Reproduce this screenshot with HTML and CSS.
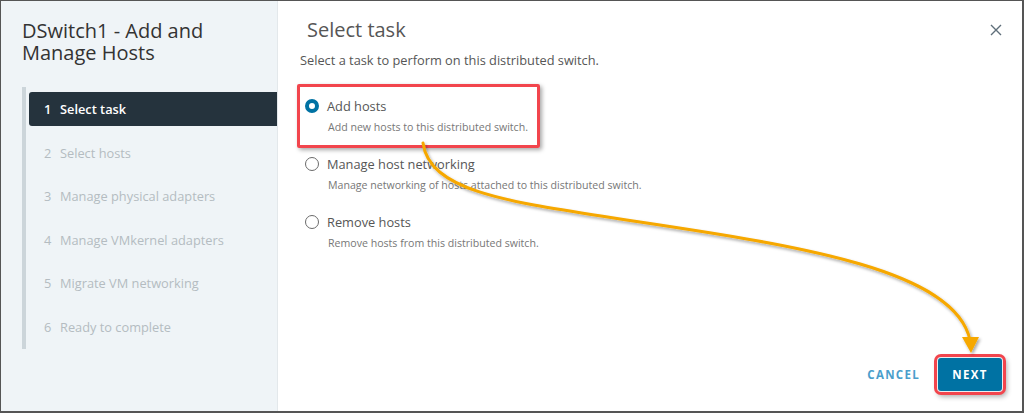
FILE: index.html
```html
<!DOCTYPE html>
<html lang="en">
<head>
<meta charset="utf-8">
<title>DSwitch1 - Add and Manage Hosts</title>
<link rel="stylesheet" href="styles.css">
</head>
<body>
<div class="modal">
  <aside class="sidebar">
    <h1 class="wizard-title">DSwitch1 - Add and Manage Hosts</h1>
    <ol class="steps">
      <li class="step active"><span class="num">1</span><span class="label">Select task</span></li>
      <li class="step"><span class="num">2</span><span class="label">Select hosts</span></li>
      <li class="step"><span class="num">3</span><span class="label">Manage physical adapters</span></li>
      <li class="step"><span class="num">4</span><span class="label">Manage VMkernel adapters</span></li>
      <li class="step"><span class="num">5</span><span class="label">Migrate VM networking</span></li>
      <li class="step"><span class="num">6</span><span class="label">Ready to complete</span></li>
    </ol>
  </aside>
  <main class="content">
    <header class="content-header">
      <h2 class="page-title">Select task</h2>
      <button class="close" aria-label="Close">
        <svg width="12" height="12" viewBox="0 0 12 12"><path d="M1 1L11 11M11 1L1 11" stroke="#5f6f7a" stroke-width="1.4" fill="none"/></svg>
      </button>
    </header>
    <p class="intro">Select a task to perform on this distributed switch.</p>
    <div class="options">
      <div class="option highlighted">
        <div class="option-row"><span class="radio checked"></span><span class="option-label">Add hosts</span></div>
        <div class="option-desc">Add new hosts to this distributed switch.</div>
      </div>
      <div class="option">
        <div class="option-row"><span class="radio"></span><span class="option-label">Manage host networking</span></div>
        <div class="option-desc">Manage networking of hosts attached to this distributed switch.</div>
      </div>
      <div class="option">
        <div class="option-row"><span class="radio"></span><span class="option-label">Remove hosts</span></div>
        <div class="option-desc">Remove hosts from this distributed switch.</div>
      </div>
    </div>
    <footer class="footer">
      <button class="btn-cancel">CANCEL</button>
      <button class="btn-next">NEXT</button>
    </footer>
  </main>
  <svg class="arrow" width="1024" height="413" viewBox="0 0 1024 413">
    <defs>
      <filter id="sh" x="-10%" y="-10%" width="120%" height="120%">
        <feDropShadow dx="1.5" dy="2" stdDeviation="1.5" flood-color="#000" flood-opacity="0.35"/>
      </filter>
    </defs>
    <g filter="url(#sh)">
      <path d="M423 143 C 430 195 520 203 640 222 C 800 246 955 270 970 340" stroke="#f6a800" stroke-width="3" fill="none" stroke-linecap="round"/>
      <path d="M962 337 L979 337 L971 353 Z" fill="#f6a800"/>
    </g>
  </svg>
</div>
</body>
</html>
```
FILE: styles.css
```css
* { box-sizing: border-box; }
html, body { margin: 0; padding: 0; }
body {
  width: 1024px;
  height: 413px;
  background: #4f4f4f;
  font-family: "Open Sans", "Noto Sans", sans-serif;
  overflow: hidden;
}
.modal {
  position: relative;
  display: flex;
  width: 1024px;
  height: 413px;
  border-top: 1px solid #555;
  border-left: 1px solid #555;
  border-right: 2px solid #555;
  border-bottom: 2px solid #555;
  background: #fff;
}
.sidebar {
  width: 277px;
  flex: none;
  background: #eff4f7;
  border-right: 1px solid #e3e8eb;
  padding: 19px 0 0 21px;
}
.wizard-title {
  margin: 0;
  font-size: 20px;
  line-height: 22px;
  font-weight: 400;
  color: #333;
  width: 230px;
}
.steps {
  list-style: none;
  margin: 23px 0 0 0;
  padding: 5px 0 5.5px 0;
  border-left: 4px solid #ccd5da;
}
.step {
  display: flex;
  align-items: center;
  height: 34px;
  margin: 0 0 9.5px 3px;
  padding-left: 15px;
  font-size: 12.8px;
  color: #b4bcc1;
  border-radius: 3px 0 0 3px;
}
.step:last-child { margin-bottom: 0; }
.step .num { width: 16px; }
.step.active {
  background: #25333d;
  color: #fff;
  font-weight: 600;
}
.content {
  flex: 1;
  display: flex;
  flex-direction: column;
  padding: 17px 20px 20px 22px;
}
.content-header {
  display: flex;
  align-items: center;
  justify-content: space-between;
}
.page-title {
  margin: 0 0 0 7px;
  font-size: 20px;
  line-height: 24px;
  font-weight: 400;
  color: #565656;
}
.close {
  border: none;
  background: none;
  padding: 0;
  width: 12px;
  height: 12px;
  display: flex;
}
.intro {
  margin: 9px 0 0 0;
  font-size: 12.8px;
  line-height: 18px;
  color: #565656;
}
.options {
  margin-top: 28px;
  display: flex;
  flex-direction: column;
  gap: 20px;
  padding-left: 5px;
}
.option { position: relative; }
.option-row {
  display: flex;
  align-items: center;
  height: 18px;
}
.radio {
  width: 14px;
  height: 14px;
  border: 1.3px solid #6b6b6b;
  border-radius: 50%;
  margin-right: 8px;
  flex: none;
}
.radio.checked {
  border: 4.5px solid #0072a3;
  background: #fff;
}
.option-label {
  font-size: 12.8px;
  color: #565656;
}
.option-desc {
  margin-top: 4px;
  margin-left: 23px;
  font-size: 10.6px;
  line-height: 16px;
  color: #777;
}
.highlighted::after {
  content: "";
  position: absolute;
  left: -8px;
  top: -13px;
  width: 237px;
  height: 58px;
  border: 3px solid #f2454d;
  border-radius: 2px;
  box-shadow: 2px 2px 4px rgba(0,0,0,0.35);
}
.footer {
  margin-top: auto;
  display: flex;
  justify-content: flex-end;
  align-items: center;
  gap: 18px;
}
.btn-cancel {
  border: none;
  background: none;
  padding: 0;
  font-family: inherit;
  font-size: 11.5px;
  font-weight: 700;
  letter-spacing: 1.3px;
  color: #4a9ecb;
}
.btn-next {
  width: 64px;
  height: 33px;
  border: none;
  border-radius: 3px;
  background: #0072a3;
  color: #fff;
  font-family: inherit;
  font-size: 11.5px;
  font-weight: 700;
  letter-spacing: 1.3px;
  box-shadow: 0 0 0 1px #e9eef1, 0 0 0 4px #f2454d, 2px 3px 5px 3px rgba(0,0,0,0.3);
}
.arrow {
  position: absolute;
  left: -1px;
  top: -1px;
  pointer-events: none;
}
```
